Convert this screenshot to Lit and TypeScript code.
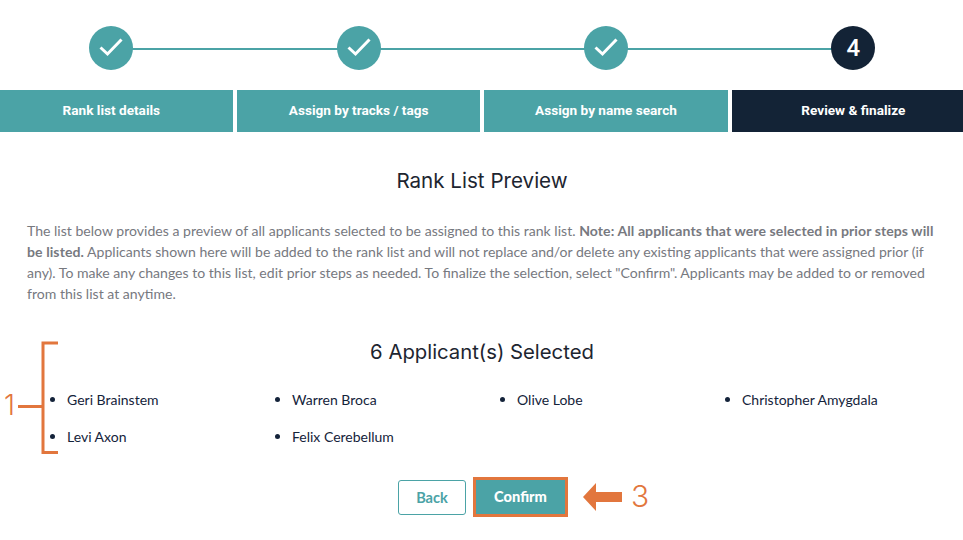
import { LitElement, html, css, svg } from "lit";
import { customElement } from "lit/decorators.js";

const steps = ["Rank list details", "Assign by tracks / tags", "Assign by name search", "Review & finalize"];
const names = ["Geri Brainstem", "Warren Broca", "Olive Lobe", "Christopher Amygdala", "Levi Axon", "Felix Cerebellum"];
const check = svg`<path d="M11.5 21.5 L18.5 28 L32.5 13.5" fill="none" stroke="#fff" stroke-width="3"/>`;

@customElement("app-root")
export class AppRoot extends LitElement {
  static styles = css`
    :host { display: block; position: relative; width: 963px; height: 540px; overflow: hidden; background: #fff;
      font-family: Lato, "Liberation Sans", sans-serif; color: #14233a; }
    .track { display: grid; grid-template-columns: repeat(4, 243.33px); gap: 4px; padding-top: 26px; position: relative; margin-left: -10.33px; width: 985px; }
    .node { display: flex; flex-direction: column; align-items: center; gap: 20px; }
    .circle { width: 44px; height: 44px; border-radius: 50%; background: #4ba3a6; color: #fff; display: flex;
      align-items: center; justify-content: center; font: 500 24px Roboto, sans-serif; position: relative; z-index: 1; }
    .circle.cur, .tab.cur { background: #132336; }
    .circle svg { width: 44px; height: 44px; display: block; }
    .line { position: absolute; left: 121px; width: 742px; top: 47.5px; height: 2.5px; background: #4ba3a6; }
    .tab { width: 100%; height: 42px; background: #4ba3a6; color: #fff; font: 700 13.6px/40px Roboto, sans-serif; display: flex;
      align-items: flex-start; justify-content: center; }
    h2 { margin: 0; font-weight: 400; text-align: center; color: #1d2530; font-family: Inter, sans-serif; }
    .title { font-size: 20.6px; line-height: 26px; margin-top: 36px; padding-left: 1px; }
    p { margin: 26px 0 0; padding: 0 27px; font-size: 14.07px; line-height: 21px; color: #77797f; white-space: nowrap; }
    p b { font-weight: 700; letter-spacing: 0.08px; }
    .sub { font-size: 20.3px; line-height: 26px; margin-top: 35px; padding-left: 1px; }
    ul { list-style: none; margin: 23.5px 0 0; padding: 0 0 0 27px; display: grid; grid-template-columns: repeat(4, 225px); row-gap: 15px; }
    li { display: flex; align-items: center; gap: 12px; padding-left: 23px; font-size: 14px; line-height: 22px; color: #14233a; }
    li::before { content: ""; width: 5px; height: 5px; border-radius: 50%; background: #14233a; margin-top: -1px; flex: none; }
    .actions { display: flex; align-items: center; gap: 7px; padding-left: 398px; margin-top: 29px; }
    button { font: 700 14.6px Lato, sans-serif; box-sizing: border-box; padding: 0; }
    .back { width: 68px; height: 35px; margin-top: 1px; background: #fff; border: 1px solid #4ba3a6; border-radius: 3px; color: #4ba3a6; }
    .confirm { width: 95px; height: 40px; background: #4ba3a6; border: 3px solid #e2763d; color: #fff; font-weight: 900; }
    .anno { position: absolute; color: #e2763d; font-family: Inter, sans-serif; font-weight: 300; line-height: 32px; }
    .one { font-size: 28px; }
    .three { font-size: 30px; }
    .bracket { position: absolute; left: 0; top: 0; width: 963px; height: 540px; pointer-events: none; }
  `;

  render() {
    return html`
      <div class="track">
        <div class="line"></div>
        ${steps.map((s, i) => html`<div class="node">
          <div class="circle ${i === 3 ? "cur" : ""}">${i === 3 ? "4" : html`<svg viewBox="0 0 44 44">${check}</svg>`}</div>
          <div class="tab ${i === 3 ? "cur" : ""}">${s}</div>
        </div>`)}
      </div>
      <h2 class="title">Rank List Preview</h2>
      <p>The list below provides a preview of all applicants selected to be assigned to this rank list. <b>Note: All applicants that were selected in prior steps will</b><br><b>be listed.</b> Applicants shown here will be added to the rank list and will not replace and/or delete any existing applicants that were assigned prior (if<br>any). To make any changes to this list, edit prior steps as needed. To finalize the selection, select "Confirm". Applicants may be added to or removed<br>from this list at anytime.</p>
      <h2 class="sub">6 Applicant(s) Selected</h2>
      <ul>${names.map((n) => html`<li>${n}</li>`)}</ul>
      <div class="actions">
        <button class="back">Back</button>
        <button class="confirm">Confirm</button>
      </div>
      <svg class="bracket" viewBox="0 0 963 540" fill="none" stroke="#e2763d" stroke-width="3">
        <path d="M58 343 H43 V452.500 H58"/>
        <path d="M18 406.500 H43"/>
        <path d="M583 497 L596 483 V492 H622 V502 H596 V511 Z" fill="#e2763d" stroke="none"/>
      </svg>
      <div class="anno one" style="left:4px;top:389px">1</div>
      <div class="anno three" style="left:631px;top:480px">3</div>
    `;
  }
}
